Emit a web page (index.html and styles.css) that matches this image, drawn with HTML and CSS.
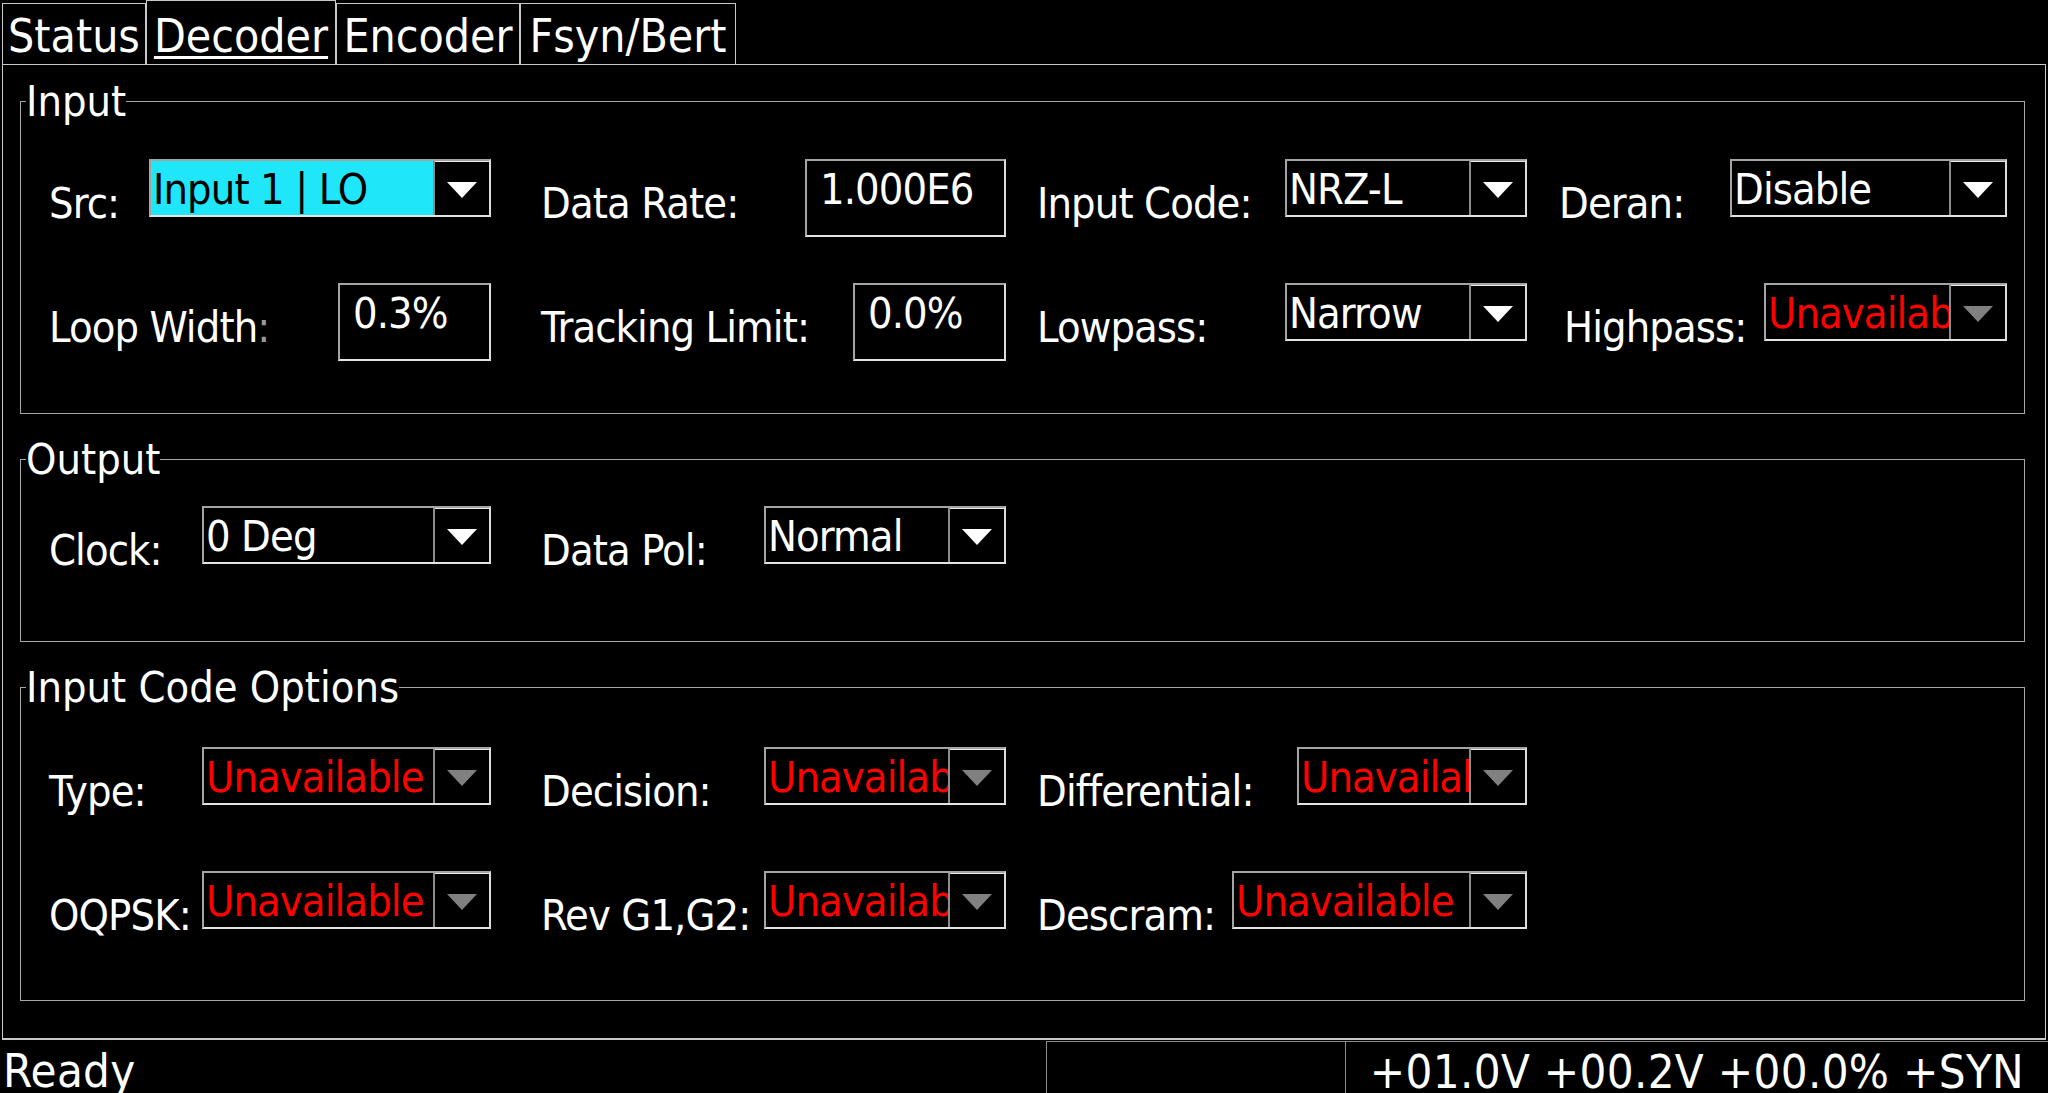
FILE: index.html
```html
<!DOCTYPE html>
<html>
<head>
<meta charset="utf-8">
<link rel="stylesheet" href="styles.css">
</head>
<body>
<div class="app">
  <div class="tabs">
    <div class="tab t-status">Status</div>
    <div class="tab t-decoder active"><span class="focus">Decoder</span></div>
    <div class="tab t-encoder">Encoder</div>
    <div class="tab t-fsyn">Fsyn/Bert</div>
  </div>

  <div class="pane">
    <fieldset class="group g-input">
      <legend>Input</legend>
      <div class="row">
        <div class="cell c1">
          <span class="lbl">Src:</span>
          <div class="dd w-src sel"><span class="val">Input 1 | LO</span><span class="btn"><i class="arr"></i></span></div>
        </div>
        <div class="cell c2">
          <span class="lbl">Data Rate:</span>
          <div class="tb w-rate"><span class="val">1.000E6</span></div>
        </div>
        <div class="cell c3">
          <span class="lbl">Input Code:</span>
          <div class="dd w-242"><span class="val">NRZ-L</span><span class="btn"><i class="arr"></i></span></div>
        </div>
        <div class="cell c4">
          <span class="lbl">Deran:</span>
          <div class="dd w-deran"><span class="val">Disable</span><span class="btn"><i class="arr"></i></span></div>
        </div>
      </div>
      <div class="row row-gap">
        <div class="cell c1">
          <span class="lbl">Loop Width<span class="dim">:</span></span>
          <div class="tb w-small"><span class="val">0.3%</span></div>
        </div>
        <div class="cell c2">
          <span class="lbl">Tracking Limit:</span>
          <div class="tb w-small"><span class="val">0.0%</span></div>
        </div>
        <div class="cell c3">
          <span class="lbl">Lowpass:</span>
          <div class="dd w-242"><span class="val">Narrow</span><span class="btn"><i class="arr"></i></span></div>
        </div>
        <div class="cell c4 c4b">
          <span class="lbl">Highpass:</span>
          <div class="dd w-243 off"><span class="val">Unavailable</span><span class="btn"><i class="arr"></i></span></div>
        </div>
      </div>
    </fieldset>

    <fieldset class="group g-output">
      <legend>Output</legend>
      <div class="row">
        <div class="cell c1">
          <span class="lbl">Clock:</span>
          <div class="dd w-289"><span class="val">0 Deg</span><span class="btn"><i class="arr"></i></span></div>
        </div>
        <div class="cell c2">
          <span class="lbl">Data Pol:</span>
          <div class="dd w-242"><span class="val">Normal</span><span class="btn"><i class="arr"></i></span></div>
        </div>
      </div>
    </fieldset>

    <fieldset class="group g-ico">
      <legend>Input Code Options</legend>
      <div class="row">
        <div class="cell c1">
          <span class="lbl">Type:</span>
          <div class="dd w-289 off"><span class="val">Unavailable</span><span class="btn"><i class="arr"></i></span></div>
        </div>
        <div class="cell c2">
          <span class="lbl">Decision:</span>
          <div class="dd w-242 off"><span class="val">Unavailable</span><span class="btn"><i class="arr"></i></span></div>
        </div>
        <div class="cell c3">
          <span class="lbl">Differential:</span>
          <div class="dd w-diff off"><span class="val">Unavailable</span><span class="btn"><i class="arr"></i></span></div>
        </div>
      </div>
      <div class="row row-gap2">
        <div class="cell c1">
          <span class="lbl">OQPSK:</span>
          <div class="dd w-289 off"><span class="val">Unavailable</span><span class="btn"><i class="arr"></i></span></div>
        </div>
        <div class="cell c2">
          <span class="lbl">Rev G1,G2:</span>
          <div class="dd w-242 off"><span class="val">Unavailable</span><span class="btn"><i class="arr"></i></span></div>
        </div>
        <div class="cell c3">
          <span class="lbl">Descram:</span>
          <div class="dd w-desc off"><span class="val">Unavailable</span><span class="btn"><i class="arr"></i></span></div>
        </div>
      </div>
    </fieldset>
  </div>

  <div class="statusbar">
    <div class="sp sp-msg">Ready</div>
    <div class="sp sp-mid"></div>
    <div class="sp sp-vals">+01.0V +00.2V +00.0% +SYN</div>
  </div>
</div>
</body>
</html>
```

FILE: styles.css
```css
html, body {
  margin: 0;
  padding: 0;
  background: #000;
}

body {
  width: 2048px;
  height: 1093px;
  overflow: hidden;
  color: #fff;
  font-family: "DejaVu Sans Condensed", "DejaVu Sans", sans-serif;
  font-stretch: condensed;
  font-size: 43px;
  letter-spacing: -0.9px;
  line-height: 51px;
}

.app {
  display: flex;
  flex-direction: column;
  height: 1093px;
}

/* ---------- tabs ---------- */
.tabs {
  display: flex;
  align-items: flex-end;
  height: 64px;
  padding-left: 2px;
}

.tab {
  box-sizing: border-box;
  height: 61px;
  border: 1px solid #c8c8c8;
  border-bottom: none;
  padding-top: 5px;
  text-align: center;
  font-size: 46px;
  letter-spacing: 0;
  line-height: 54px;
  white-space: nowrap;
}

.t-status { width: 144px; }
.t-decoder { width: 190px; }
.t-encoder { width: 184px; }
.t-fsyn { width: 216px; }

.tab.active {
  height: 64px;
  padding-top: 8px;
}

.focus {
  text-decoration: underline;
  text-decoration-thickness: 3px;
  text-underline-offset: 4px;
}

/* ---------- pane ---------- */
.pane {
  box-sizing: border-box;
  margin-left: 2px;
  width: 2044px;
  height: 976px;
  border: 1px solid #c8c8c8;
  border-bottom: 2px solid #c8c8c8;
  padding: 0 20px 0 17px;
}

.group {
  margin: 20px 0 0 0;
  min-width: 0;
  border: 1px solid #a8a8a8;
  padding: 0 0 0 5px;
}

.group legend {
  padding: 0;
  margin-left: 0;
  font-size: 43px;
  letter-spacing: 0;
  line-height: 50px;
}

.g-input {
  margin-top: 11px;
  padding-top: 33px;
  padding-bottom: 52px;
}

.g-output {
  padding-top: 22px;
  padding-bottom: 77px;
}

.g-ico {
  padding-top: 35px;
  padding-bottom: 71px;
}

.row {
  display: flex;
  align-items: flex-start;
  margin-left: 23px;
}

.row-gap { margin-top: 46px; }
.row-gap2 { margin-top: 66px; }

.cell {
  display: flex;
  justify-content: space-between;
  align-items: flex-start;
  flex-shrink: 0;
}

.c1 { width: 442px; }
.c2 { width: 465px; margin-left: 50px; }
.c3 { width: 490px; margin-left: 31px; }
.c4 { width: 448px; margin-left: 32px; }
.c4b .lbl { padding-left: 5px; }

.lbl {
  padding-top: 19px;
  margin-bottom: -14px;
  white-space: nowrap;
}

.dim { color: #9a9a9a; }

/* ---------- dropdown ---------- */
.dd {
  box-sizing: border-box;
  display: flex;
  flex-shrink: 0;
  height: 58px;
  border: 2px solid;
  border-color: #a4a4a4 #dcdcdc #e4e4e4 #a4a4a4;
  background: #000;
}

.dd .val {
  flex: 1;
  min-width: 0;
  overflow: hidden;
  white-space: nowrap;
  padding: 3px 0 0 2px;
}

.dd.sel .val {
  background: #1fe6f8;
  color: #000;
}

.dd.off .val {
  color: #ff0000;
}

.dd .btn {
  box-sizing: border-box;
  width: 56px;
  flex-shrink: 0;
  border-left: 2px solid #8c8c8c;
  box-shadow: inset 0 1px 0 #e8e8e8;
  display: flex;
  align-items: center;
  justify-content: center;
}

.arr {
  display: block;
  width: 0;
  height: 0;
  margin-top: 4px;
  border-left: 15px solid transparent;
  border-right: 15px solid transparent;
  border-top: 16px solid #fff;
}

.dd.off .arr {
  border-top-color: #808080;
}

.w-src { width: 342px; }
.w-242 { width: 242px; }
.w-243 { width: 243px; }
.w-deran { width: 277px; }
.w-289 { width: 289px; }
.w-diff { width: 230px; }
.w-desc { width: 295px; }

/* ---------- text box ---------- */
.tb {
  box-sizing: border-box;
  flex-shrink: 0;
  height: 78px;
  border: 2px solid;
  border-color: #a4a4a4 #dcdcdc #e4e4e4 #a4a4a4;
  padding: 3px 0 0 13px;
  white-space: nowrap;
  overflow: hidden;
}

.w-rate { width: 201px; }
.w-small { width: 153px; }

/* ---------- status bar ---------- */
.statusbar {
  display: flex;
  height: 53px;
  box-sizing: border-box;
  padding-top: 1px;
  font-size: 47px;
  letter-spacing: 0.3px;
}

.sp {
  box-sizing: border-box;
  height: 52px;
  padding-top: 4px;
  white-space: nowrap;
}

.sp-msg {
  width: 1046px;
  padding-left: 3px;
}

.sp-mid {
  width: 299px;
  border-left: 1px solid #8c8c8c;
  border-top: 1px solid #8c8c8c;
}

.sp-vals {
  flex: 1;
  border-left: 1px solid #8c8c8c;
  border-top: 1px solid #8c8c8c;
  text-align: right;
  padding-right: 24px;
}
```
